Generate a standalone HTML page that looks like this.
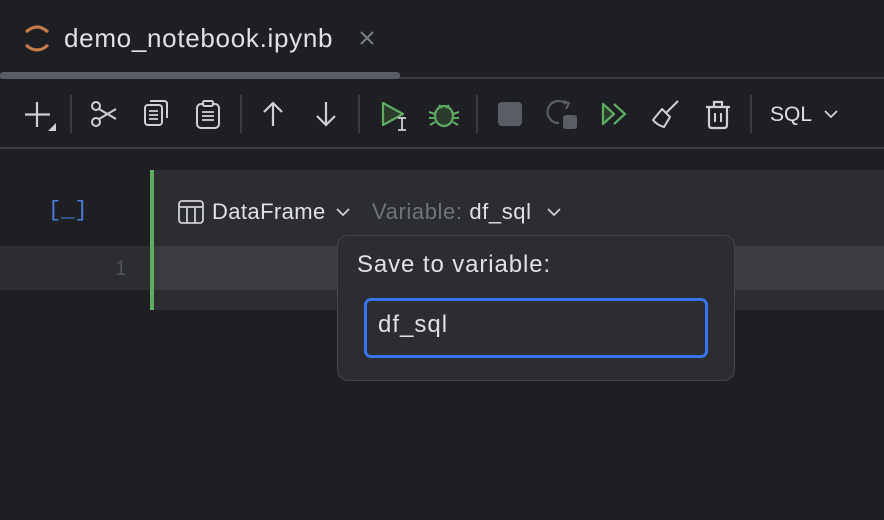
<!DOCTYPE html>
<html><head><style>
body{margin:0;width:884px;height:520px;background:#1e1f22;font-family:"Liberation Sans",sans-serif;position:relative;overflow:hidden;color:#dfe1e5}
.a{position:absolute;white-space:nowrap}
.sep{position:absolute;top:95px;width:2px;height:38px;background:#393b40}
svg{position:absolute;overflow:visible}
</style></head><body>
<svg style="left:24px;top:26px" width="28" height="26"><path d="M2 6 Q13 -4 24 6" stroke="#c77d4a" stroke-width="3" fill="none"/><path d="M2 19 Q13 29 24 19" stroke="#c77d4a" stroke-width="3" fill="none"/></svg>
<div class="a" style="left:64px;top:23px;font-size:26px;letter-spacing:0.7px;color:#dfe1e5">demo_notebook.ipynb</div>
<svg style="left:360px;top:31px" width="14" height="14"><path d="M1 1L13 13M13 1L1 13" stroke="#7a7e85" stroke-width="2"/></svg>
<div class="a" style="left:0;top:77px;width:884px;height:2px;background:#393b40"></div>
<div class="a" style="left:0;top:72px;width:400px;height:7px;border-radius:3px;background:#5a5d63"></div>
<svg style="left:24px;top:101px" width="34" height="32"><path d="M13 1V26M1 13.5H26" stroke="#ced0d6" stroke-width="2.2"/><path d="M32 22V30H24Z" fill="#ced0d6"/></svg>
<div class="sep" style="left:70px"></div>
<svg style="left:91px;top:101px" width="26" height="26"><circle cx="5" cy="5" r="4" stroke="#ced0d6" stroke-width="2" fill="none"/><circle cx="5" cy="21" r="4" stroke="#ced0d6" stroke-width="2" fill="none"/><path d="M8 8L25 18M8 18L25 8" stroke="#ced0d6" stroke-width="2"/></svg>
<svg style="left:144px;top:100px" width="26" height="28"><rect x="1" y="5" width="17" height="20" rx="3" stroke="#ced0d6" stroke-width="2" fill="#1e1f22"/><path d="M6 1H20Q23 1 23 4V18" stroke="#ced0d6" stroke-width="2" fill="none"/><path d="M5 11H14M5 15H14M5 19H14" stroke="#ced0d6" stroke-width="1.8"/></svg>
<svg style="left:196px;top:100px" width="26" height="30"><rect x="1" y="4" width="22" height="24" rx="4" stroke="#ced0d6" stroke-width="2" fill="none"/><rect x="7" y="1" width="10" height="5" rx="1.5" stroke="#ced0d6" stroke-width="2" fill="#1e1f22"/><path d="M6 12H18M6 16H18M6 20H18" stroke="#ced0d6" stroke-width="1.8"/></svg>
<div class="sep" style="left:240px"></div>
<svg style="left:262px;top:101px" width="22" height="26"><path d="M11 25V2M2 11L11 2L20 11" stroke="#ced0d6" stroke-width="2.2" fill="none"/></svg>
<svg style="left:315px;top:101px" width="22" height="26"><path d="M11 1V24M2 15L11 24L20 15" stroke="#ced0d6" stroke-width="2.2" fill="none"/></svg>
<div class="sep" style="left:358px"></div>
<svg style="left:381px;top:101px" width="30" height="30"><path d="M2 2L22 13L2 24Z" stroke="#5fad65" stroke-width="2.2" fill="#2b3a2b" stroke-linejoin="round"/><path d="M17 17H25M21 17V29M17 29H25" stroke="#ced0d6" stroke-width="1.8"/></svg>
<svg style="left:428px;top:100px" width="32" height="28"><ellipse cx="16" cy="16" rx="9" ry="10" stroke="#5fad65" stroke-width="2.2" fill="#2b3a2b"/><path d="M11 5L14 8M21 5L18 8M1 12L7 14M31 12L25 14M1 18H7M25 18H31M2 25L7 22M30 25L25 22" stroke="#5fad65" stroke-width="2"/></svg>
<div class="sep" style="left:476px"></div>
<div class="a" style="left:498px;top:102px;width:24px;height:24px;border-radius:4px;background:#5a5d63"></div>
<svg style="left:549px;top:100px" width="30" height="30"><path d="M17 4A11 11 0 1 0 10 23" stroke="#5a5d63" stroke-width="2.2" fill="none"/><path d="M14 1L20 3L17 9" stroke="#5a5d63" stroke-width="2" fill="none"/><rect x="14" y="15" width="14" height="14" rx="3" fill="#5a5d63"/></svg>
<svg style="left:601px;top:102px" width="28" height="26"><path d="M2 2L13 12L2 22Z" stroke="#5fad65" stroke-width="2.2" fill="#2b3a2b" stroke-linejoin="round"/><path d="M13 2L24 12L13 22" stroke="#5fad65" stroke-width="2.2" fill="none"/></svg>
<svg style="left:651px;top:100px" width="30" height="30"><path d="M15 13L27 1" stroke="#ced0d6" stroke-width="2"/><path d="M11 9L19 17L13 27Q6 25 2 20Z" stroke="#ced0d6" stroke-width="2" fill="none" stroke-linejoin="round"/></svg>
<svg style="left:705px;top:100px" width="26" height="30"><path d="M1 7H25M9 7V2H17V7" stroke="#ced0d6" stroke-width="2.2" fill="none"/><path d="M4 8V25Q4 28 7 28H19Q22 28 22 25V8" stroke="#ced0d6" stroke-width="2.2" fill="none"/><path d="M10 13V22M16 13V22" stroke="#ced0d6" stroke-width="2"/></svg>
<div class="sep" style="left:750px"></div>
<div class="a" style="left:770px;top:103px;font-size:21px;color:#dfe1e5">SQL</div>
<svg style="left:824px;top:109px" width="14" height="10"><path d="M1 2L7 8L13 2" stroke="#ced0d6" stroke-width="1.8" fill="none"/></svg>
<div class="a" style="left:0;top:147px;width:884px;height:2px;background:#393b40"></div>
<div class="a" style="left:154px;top:170px;width:730px;height:140px;background:#2b2d30"></div>
<div class="a" style="left:0;top:246px;width:150px;height:44px;background:#2b2d30"></div>
<div class="a" style="left:154px;top:246px;width:730px;height:44px;background:#393b40"></div>
<div class="a" style="left:150px;top:170px;width:4px;height:140px;background:#5fad65"></div>
<div class="a" style="left:48px;top:198px;font-size:22px;color:#4a7ddb;font-family:'Liberation Mono',monospace">[_]</div>
<div class="a" style="left:115px;top:257px;font-size:21px;color:#4e5157">1</div>
<svg style="left:178px;top:200px" width="28" height="24"><rect x="1" y="1" width="24" height="22" rx="3" stroke="#ced0d6" stroke-width="1.8" fill="none"/><path d="M1 7H25M9 7V23M17 7V23" stroke="#ced0d6" stroke-width="1.8"/></svg>
<div class="a" style="left:212px;top:199px;font-size:22px;letter-spacing:0.4px;color:#dfe1e5">DataFrame</div>
<svg style="left:336px;top:207px" width="14" height="10"><path d="M1 2L7 8L13 2" stroke="#ced0d6" stroke-width="1.8" fill="none"/></svg>
<div class="a" style="left:372px;top:199px;font-size:22px;letter-spacing:0.6px;color:#6f737a">Variable: <span style="color:#dfe1e5">df_sql</span></div>
<svg style="left:547px;top:207px" width="14" height="10"><path d="M1 2L7 8L13 2" stroke="#ced0d6" stroke-width="1.8" fill="none"/></svg>
<div class="a" style="left:337px;top:235px;width:396px;height:144px;border:1px solid #43454a;border-radius:11px;background:#2b2d30"></div>
<div class="a" style="left:357px;top:251px;font-size:24px;letter-spacing:0.9px;color:#dfe1e5">Save to variable:</div>
<div class="a" style="left:364px;top:298px;width:338px;height:54px;border:3px solid #3574f0;border-radius:7px;background:#2b2d30"></div>
<div class="a" style="left:378px;top:311px;font-size:24px;letter-spacing:1px;color:#dfe1e5">df_sql</div>
</body></html>
